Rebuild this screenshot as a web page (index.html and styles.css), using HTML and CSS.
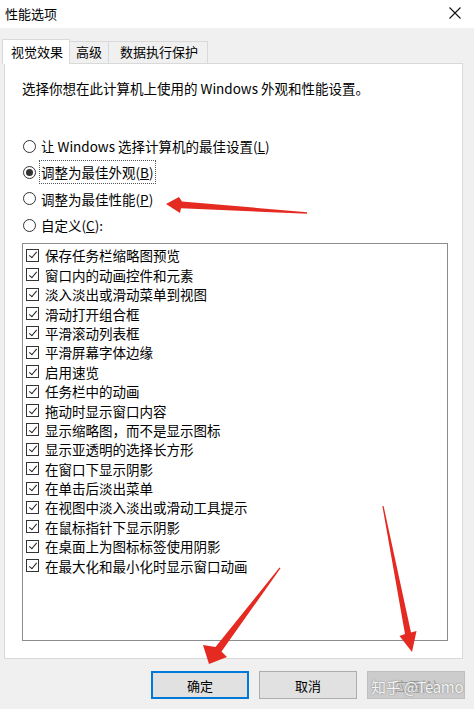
FILE: index.html
```html
<!DOCTYPE html>
<html lang="zh-CN">
<head>
  <meta charset="UTF-8" />
  <meta name="viewport" content="width=device-width, initial-scale=1.0"/>
  <title>性能选项</title>
  <link rel="stylesheet" href="styles.css">
</head>
<body>
  <div class="window">
    <div class="titlebar">
      <span class="title">性能选项</span>
      <svg class="close" width="12" height="12" viewBox="0 0 12 12">
        <path d="M0.5 0.5 L11.5 11.5 M11.5 0.5 L0.5 11.5" stroke="#111" stroke-width="1.1" fill="none"/>
      </svg>
    </div>

    <div class="body">
      <div class="tabs">
        <div class="tab active">视觉效果</div>
        <div class="tab">高级</div>
        <div class="tab">数据执行保护</div>
      </div>

      <div class="panel">
        <p class="desc">选择你想在此计算机上使用的 Windows 外观和性能设置。</p>

        <div class="radios">
          <div class="radio"><span class="dot"></span><span class="label">让 Windows 选择计算机的最佳设置(<u>L</u>)</span></div>
          <div class="radio"><span class="dot checked"></span><span class="label focus">调整为最佳外观(<u>B</u>)</span></div>
          <div class="radio"><span class="dot"></span><span class="label">调整为最佳性能(<u>P</u>)</span></div>
          <div class="radio"><span class="dot"></span><span class="label">自定义(<u>C</u>):</span></div>
        </div>

        <div class="listbox">
          <div class="item"><span class="box"></span>保存任务栏缩略图预览</div>
          <div class="item"><span class="box"></span>窗口内的动画控件和元素</div>
          <div class="item"><span class="box"></span>淡入淡出或滑动菜单到视图</div>
          <div class="item"><span class="box"></span>滑动打开组合框</div>
          <div class="item"><span class="box"></span>平滑滚动列表框</div>
          <div class="item"><span class="box"></span>平滑屏幕字体边缘</div>
          <div class="item"><span class="box"></span>启用速览</div>
          <div class="item"><span class="box"></span>任务栏中的动画</div>
          <div class="item"><span class="box"></span>拖动时显示窗口内容</div>
          <div class="item"><span class="box"></span>显示缩略图，而不是显示图标</div>
          <div class="item"><span class="box"></span>显示亚透明的选择长方形</div>
          <div class="item"><span class="box"></span>在窗口下显示阴影</div>
          <div class="item"><span class="box"></span>在单击后淡出菜单</div>
          <div class="item"><span class="box"></span>在视图中淡入淡出或滑动工具提示</div>
          <div class="item"><span class="box"></span>在鼠标指针下显示阴影</div>
          <div class="item"><span class="box"></span>在桌面上为图标标签使用阴影</div>
          <div class="item"><span class="box"></span>在最大化和最小化时显示窗口动画</div>
        </div>
      </div>

      <div class="buttons">
        <button class="btn default">确定</button>
        <button class="btn">取消</button>
        <button class="btn disabled">应用(A)</button>
      </div>
    </div>

    <div class="watermark">知乎 @Teamo</div>

    <!-- red annotation arrows drawn over the screenshot -->
    <svg class="arrows" width="474" height="709" viewBox="0 0 474 709">
      <polygon fill="#e52a22" points="166,204 179,197 182,201.4 307,212.3 307,213.7 181,208.2 180,213"/>
      <polygon fill="#e52a22" points="209,664 203,645 215.5,647 279.5,567.5 280.5,568.3 221.5,651.5 227,657"/>
      <polygon fill="#e52a22" points="412,652 399.5,636 405,634 382.4,506.2 383.6,506 411,632.6 416.5,631"/>
    </svg>
  </div>
</body>
</html>
```

FILE: styles.css
```css
* {
  box-sizing: border-box;
}

body {
  margin: 0;
  background-color: #f0f0f0;
  font-family: "Noto Sans CJK SC", "Microsoft YaHei", sans-serif;
  color: #000;
}

.window {
  position: relative;
  width: 474px;
  height: 709px;
  overflow: hidden;
}

.titlebar {
  height: 28px;
  background-color: #fff;
  display: flex;
  align-items: center;
  justify-content: space-between;
  padding: 0 13px 2px 5px;
}

.title {
  font-size: 13px;
}

.body {
  padding: 10px 0 0 4px;
}

/* Tabs */
.tabs {
  display: flex;
  align-items: flex-end;
  height: 25px;
  margin-left: -1px;
}

.tab {
  font-size: 13px;
  height: 22px;
  line-height: 20px;
  padding: 0 6px;
  background-color: #f0f0f0;
  border: 1px solid #d9d9d9;
  border-bottom: none;
  margin-left: -1px;
}

.tab.active {
  height: 25px;
  line-height: 24px;
  background-color: #fff;
  padding: 0 6px 0 8px;
  position: relative;
  z-index: 1;
  margin-bottom: -1px;
}

.tab:nth-child(3) {
  padding: 0 9px 0 11px;
}

.panel {
  width: 459px;
  height: 596px;
  background-color: #fff;
  border: 1px solid #d9d9d9;
  padding: 14px 0 0 17px;
}

.desc {
  margin: 0;
  font-size: 13.5px;
  line-height: 20px;
}

/* Radio buttons */
.radios {
  margin-top: 35px;
}

.radio {
  display: flex;
  align-items: center;
  height: 26.3px;
  font-size: 13.5px;
  margin-left: 1px;
}

.dot {
  width: 13px;
  height: 13px;
  border: 1px solid #333;
  border-radius: 50%;
  margin-right: 3px;
  display: flex;
  align-items: center;
  justify-content: center;
  flex-shrink: 0;
}

.dot.checked::after {
  content: "";
  width: 7px;
  height: 7px;
  border-radius: 50%;
  background-color: #333;
}

.label {
  padding: 1px 1px;
  border: 1px dotted transparent;
}

.label.focus {
  border-color: #555;
}

/* Checkbox list */
.listbox {
  margin-top: 5px;
  width: 426px;
  height: 398px;
  border: 1px solid #8c8c8c;
  padding: 1.5px 0 0 3px;
}

.item {
  display: flex;
  align-items: center;
  height: 19.4px;
  font-size: 13.5px;
}

.box {
  width: 13px;
  height: 13px;
  border: 1px solid #333;
  margin-right: 6px;
  flex-shrink: 0;
  position: relative;
}

.box::after {
  content: "";
  position: absolute;
  left: 3.5px;
  top: 0.5px;
  width: 3px;
  height: 7px;
  border-right: 1.3px solid #222;
  border-bottom: 1.3px solid #222;
  transform: rotate(40deg);
}

/* Bottom buttons */
.buttons {
  display: flex;
  justify-content: flex-end;
  gap: 10px;
  margin-top: 12px;
  padding-right: 9px;
}

.btn {
  width: 98px;
  height: 28px;
  font-family: inherit;
  font-size: 13px;
  background-color: #e1e1e1;
  border: 1px solid #adadad;
  color: #000;
  padding: 0;
}

.btn.default {
  border: 2px solid #0078d7;
}

.btn.disabled {
  background-color: #cccccc;
  border-color: #bfbfbf;
  color: #9a9a9a;
}

.watermark {
  position: absolute;
  left: 371px;
  top: 676px;
  font-family: "Noto Sans CJK SC", sans-serif;
  font-size: 15px;
  letter-spacing: -0.3px;
  color: rgba(255, 255, 255, 0.92);
  text-shadow: 0 0 1px #888, 0 0 2px #999;
  pointer-events: none;
}

.arrows {
  position: absolute;
  top: 0;
  left: 0;
  pointer-events: none;
}
```
